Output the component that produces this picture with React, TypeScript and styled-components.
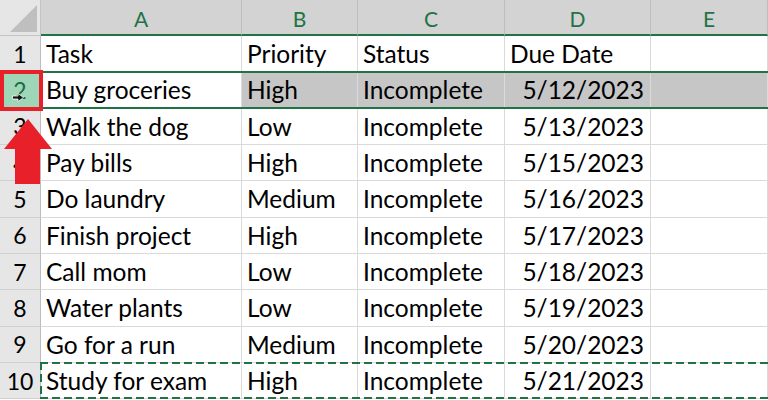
import styled, { createGlobalStyle } from "styled-components";

const GREEN = "#217346";
const RED = "#e8202a";

const GlobalStyle = createGlobalStyle`
  html, body {
    margin: 0;
    padding: 0;
    background: #ffffff;
    overflow: hidden;
  }
  body {
    font-family: Lato, "Open Sans", sans-serif;
  }
`;

const columns = ["A", "B", "C", "D", "E"];

const tasks: [string, string, string, string][] = [
  ["Task", "Priority", "Status", "Due Date"],
  ["Buy groceries", "High", "Incomplete", "5/12/2023"],
  ["Walk the dog", "Low", "Incomplete", "5/13/2023"],
  ["Pay bills", "High", "Incomplete", "5/15/2023"],
  ["Do laundry", "Medium", "Incomplete", "5/16/2023"],
  ["Finish project", "High", "Incomplete", "5/17/2023"],
  ["Call mom", "Low", "Incomplete", "5/18/2023"],
  ["Water plants", "Low", "Incomplete", "5/19/2023"],
  ["Go for a run", "Medium", "Incomplete", "5/20/2023"],
  ["Study for exam", "High", "Incomplete", "5/21/2023"],
];

const SELECTED_ROW = 2;

const App = () => {
  return (
    <>
      <GlobalStyle />
      <Sheet>
        <Corner>
          <svg width="41" height="36" viewBox="0 0 41 36">
            <polygon points="10,32 37,32 37,5" fill="#bfbfbf" />
          </svg>
        </Corner>
        {columns.map((c) => (
          <ColHead key={c}>{c}</ColHead>
        ))}

        {tasks.map((row, i) => {
          const num = i + 1;
          const selected = num === SELECTED_ROW;
          return (
            <Row key={num}>
              <RowHead $selected={selected}>
                {num}
                {selected && (
                  <Cursor width="12" height="9" viewBox="0 0 12 9">
                    <polygon
                      points="0.5,3 6,3 6,0.5 11.5,4.5 6,8.5 6,6 0.5,6"
                      fill="#111"
                      stroke="#fff"
                      strokeWidth="0.8"
                    />
                  </Cursor>
                )}
              </RowHead>
              {row.map((value, j) => (
                <Cell
                  key={j}
                  $shade={selected && j > 0}
                  $right={i > 0 && j === 3}
                >
                  {value}
                </Cell>
              ))}
              <Cell $shade={selected} />
            </Row>
          );
        })}

        <RowSelection />
        <CopyMarquee />
        <Highlight />
        <Arrow width="56" height="70" viewBox="0 0 56 70">
          <polygon
            points="28,0 52,30 40,30 40,65 15,65 15,30 4,30"
            fill={RED}
          />
        </Arrow>
      </Sheet>
    </>
  );
};

const Sheet = styled.div`
  position: relative;
  display: grid;
  grid-template-columns: 41px 201px 116px 147px 146px 117px;
  grid-template-rows: 36px repeat(10, 36.33px);
  width: 768px;
  height: 400px;
  overflow: hidden;
  color: #000;
`;

const Row = styled.div`
  display: contents;
`;

const Corner = styled.div`
  background: #e6e6e6;
  border-right: 1px solid #c4c4c4;
  border-bottom: 1px solid #c4c4c4;
  box-sizing: border-box;

  svg {
    display: block;
  }
`;

const ColHead = styled.div`
  box-sizing: border-box;
  display: flex;
  align-items: center;
  justify-content: center;
  background: #d3d3d3;
  color: ${GREEN};
  font-size: 21px;
  border-right: 1px solid #bdbdbd;
  border-bottom: 2px solid ${GREEN};
  padding-top: 2px;
`;

const RowHead = styled.div<{ $selected?: boolean }>`
  position: relative;
  box-sizing: border-box;
  display: flex;
  align-items: center;
  justify-content: center;
  background: ${({ $selected }) => ($selected ? "#a0d6b8" : "#e6e6e6")};
  color: ${({ $selected }) => ($selected ? "#1e6b41" : "#000")};
  font-size: 23px;
  border-right: 1px solid #bdbdbd;
  border-bottom: 1px solid #d0d0d0;
`;

const Cursor = styled.svg`
  position: absolute;
  left: 12px;
  top: 21px;
`;

const Cell = styled.div<{ $shade?: boolean; $right?: boolean }>`
  box-sizing: border-box;
  display: flex;
  align-items: center;
  justify-content: ${({ $right }) => ($right ? "flex-end" : "flex-start")};
  padding: 0 6px 0 5px;
  background: ${({ $shade }) => ($shade ? "#c6c6c6" : "#ffffff")};
  font-size: 24.5px;
  white-space: nowrap;
  overflow: hidden;
  border-right: 1px solid #dadada;
  border-bottom: 1px solid #dadada;
`;

const RowSelection = styled.div`
  position: absolute;
  left: 41px;
  right: 0;
  top: 71px;
  height: 38px;
  box-sizing: border-box;
  border-top: 2px solid ${GREEN};
  border-bottom: 2px solid ${GREEN};
  pointer-events: none;
`;

const dash = (dir: string) =>
  `repeating-linear-gradient(${dir}, ${GREEN} 0 8px, transparent 8px 12px)`;

const CopyMarquee = styled.div`
  position: absolute;
  left: 40px;
  right: 0;
  top: 362px;
  height: 37px;
  pointer-events: none;
  background:
    ${dash("to right")} left top / 100% 2px no-repeat,
    ${dash("to right")} left bottom / 100% 2px no-repeat,
    ${dash("to bottom")} left top / 2px 100% no-repeat;
`;

const Highlight = styled.div`
  position: absolute;
  left: 0;
  top: 70px;
  width: 43px;
  height: 41px;
  box-sizing: border-box;
  border: 4px solid ${RED};
  pointer-events: none;
`;

const Arrow = styled.svg`
  position: absolute;
  left: 0;
  top: 119px;
`;

export default App;
